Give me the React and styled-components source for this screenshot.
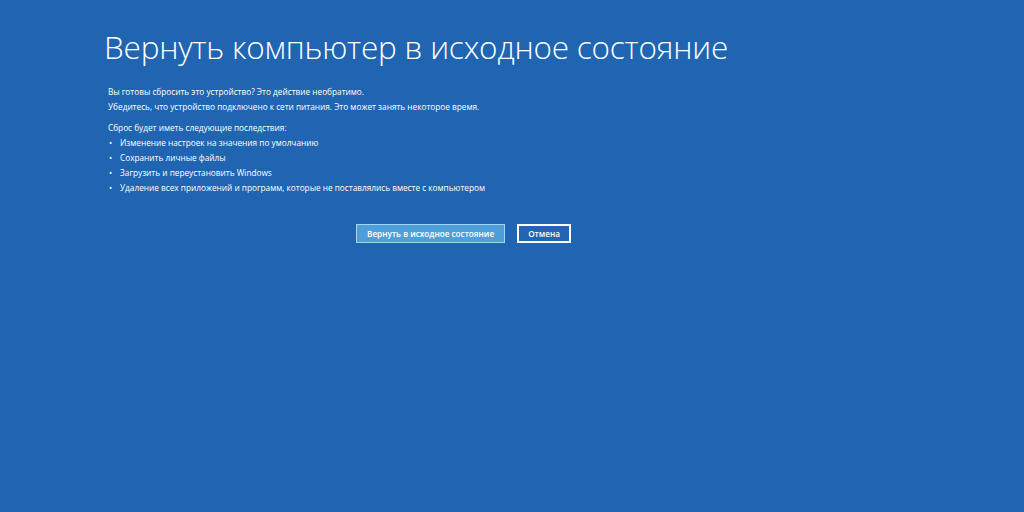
import React from "react";
import styled, { createGlobalStyle } from "styled-components";

const GlobalStyle = createGlobalStyle`
  html, body {
    margin: 0;
    padding: 0;
    background: #1f65b2;
  }
`;

const Screen = styled.div`
  width: 1024px;
  height: 512px;
  background: #1f65b2;
  color: #ffffff;
  font-family: "Open Sans", "Noto Sans", sans-serif;
  box-sizing: border-box;
  padding: 25px 0 0 104px;
  overflow: hidden;
`;

const Title = styled.h1`
  margin: 0;
  font-size: 31.5px;
  font-weight: 300;
  line-height: 44px;
  letter-spacing: -0.2px;
`;

const Body = styled.div`
  padding-left: 4px;
  margin-top: 15px;
  font-size: 8.25px;
  line-height: 15px;
`;

const Para = styled.p`
  margin: 0 0 ${(p) => p.gap || 0}px;
`;

const List = styled.ul`
  list-style: none;
  margin: 0;
  padding: 0;
`;

const Item = styled.li`
  display: flex;
  &::before {
    content: "•";
    width: 11px;
    padding-left: 1px;
  }
`;

const Actions = styled.div`
  display: flex;
  gap: 12px;
  margin: 29px 0 0 252px;
`;

const Button = styled.button`
  height: 19px;
  padding: 0 ${(p) => (p.primary ? 10 : 9)}px;
  font-family: "Open Sans", "Noto Sans", sans-serif;
  font-size: 8.2px;
  font-weight: 600;
  color: #ffffff;
  background: ${(p) => (p.primary ? "#4c9fdb" : "transparent")};
  border: ${(p) => (p.primary ? "1px solid #a6d3f3" : "2px solid #ffffff")};
  box-sizing: border-box;
  cursor: pointer;
`;

export default function App() {
  return (
    <>
      <GlobalStyle />
      <Screen>
        <Title>Вернуть компьютер в исходное состояние</Title>
        <Body>
          <Para>Вы готовы сбросить это устройство? Это действие необратимо.</Para>
          <Para gap={6}>
            Убедитесь, что устройство подключено к сети питания. Это может занять некоторое время.
          </Para>
          <Para>Сброс будет иметь следующие последствия:</Para>
          <List>
            <Item>Изменение настроек на значения по умолчанию</Item>
            <Item>Сохранить личные файлы</Item>
            <Item>Загрузить и переустановить Windows</Item>
            <Item>Удаление всех приложений и программ, которые не поставлялись вместе с компьютером</Item>
          </List>
        </Body>
        <Actions>
          <Button primary>Вернуть в исходное состояние</Button>
          <Button>Отмена</Button>
        </Actions>
      </Screen>
    </>
  );
}
